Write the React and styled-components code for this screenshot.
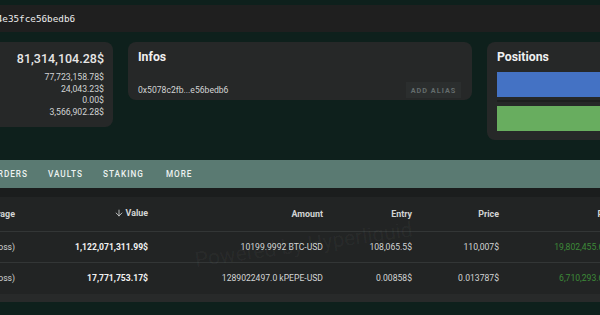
import React from 'react'
import styled, { createGlobalStyle } from 'styled-components'
import { ArrowDown } from 'lucide-react'

const color = {
	bg: '#0e201c',
	bar: '#1f1f1f',
	card: '#262828',
	table: '#222424',
	line: '#333636',
	text: '#e6e6e6',
	soft: '#d2d4d4',
	tab: '#5a7a72',
	blue: '#4472c4',
	green: '#68ad5f',
	pnl: '#3d8a38',
}

const Global = createGlobalStyle`
	html, body {
		margin: 0;
		background: ${ color.bg };
		overflow: hidden;
	}
	body {
		font-family: Roboto, "Noto Sans", sans-serif;
		color: ${ color.text };
	}
`

const Page = styled.div`
	width: 1100px;
	margin-left: -200px;
	padding-top: 5px;
	display: flex;
	flex-direction: column;
`
const TopBar = styled.div`
	height: 27px;
	background: ${ color.bar };
	display: flex;
	align-items: center;
	padding-left: 40px;
	font-family: "DejaVu Sans Mono", "Liberation Mono", monospace;
	font-size: 9.3px;
	color: #ececec;
`
const Cards = styled.div`
	display: flex;
	align-items: flex-start;
	gap: 15px;
	margin: 10px 0 20px 20px;
`
const Card = styled.div`
	background: ${ color.card };
	border-radius: 8px;
	width: ${ p => p.$w }px;
	height: ${ p => p.$h }px;
	box-sizing: border-box;
	padding: 7px 10px 0;
	display: flex;
	flex-direction: column;
`
const Totals = styled(Card)`
	align-items: flex-end;
	padding: 9px 9px 0 0;
`
const Big = styled.div`
	font-size: 12.5px;
	font-weight: 500;
	line-height: 16px;
	margin-bottom: 5px;
`
const Small = styled.div`
	font-size: 8.7px;
	line-height: 11.7px;
	color: ${ color.soft };
`
const CardTitle = styled.div`
	font-size: 12.3px;
	font-weight: 700;
	line-height: 16px;
	color: #f0f0f0;
`
const InfoRow = styled.div`
	display: flex;
	align-items: center;
	justify-content: space-between;
	margin-top: 17px;
	padding-right: 1px;
	font-size: 8.6px;
	color: ${ color.soft };
`
const Alias = styled.span`
	background: #2b2e2e;
	color: #646c6c;
	font-size: 7.3px;
	font-weight: 700;
	letter-spacing: 1px;
	height: 16px;
	width: 55px;
	display: flex;
	align-items: center;
	justify-content: center;
`
const Bars = styled.div`
	display: flex;
	flex-direction: column;
	margin-top: 7px;
`
const Bar = styled.div`
	height: 25px;
	background: ${ p => p.$c };
`
const Divider = styled.div`
	height: 2px;
	margin: 3px 0 4px;
	background: #1d1f1f;
`
const Tabs = styled.div`
	display: flex;
	align-items: center;
	height: 28px;
	margin-left: 20px;
	padding-left: 62px;
	background: ${ color.tab };
`
const Tab = styled.div`
	padding: 0 10px;
	margin-left: ${ p => p.$gap || 0 }px;
	font-size: 8.2px;
	font-weight: 500;
	letter-spacing: 1px;
	color: #eef2f1;
	white-space: nowrap;
`
const Shade = styled.div`
	height: 9px;
	margin-left: 20px;
	background: #1b1d1d;
`
const TableWrap = styled.div`
	position: relative;
	margin-left: 20px;
	background: ${ color.table };
	overflow: hidden;
`
const Table = styled.table`
	border-collapse: collapse;
	table-layout: fixed;
`
const Th = styled.th`
	width: ${ p => p.$w }px;
	height: 34px;
	padding: 0;
	text-align: ${ p => p.$left ? 'left' : 'right' };
	font-size: 8.9px;
	font-weight: 700;
	color: ${ color.soft };
	border-bottom: 1px solid ${ color.line };
	white-space: nowrap;
`
const Td = styled.td`
	height: 30px;
	padding: 0;
	text-align: ${ p => p.$left ? 'left' : 'right' };
	font-size: 8.6px;
	font-weight: ${ p => p.$bold ? 700 : 400 };
	color: ${ p => p.$pnl ? color.pnl : p.$bold ? '#f2f2f2' : color.soft };
	border-bottom: 1px solid ${ p => p.$last ? 'transparent' : color.line };
	white-space: nowrap;
`
const SortHead = styled.span`
	display: inline-flex;
	align-items: center;
	gap: 2px;
`
const Foot = styled.div`
	height: 8px;
	background: #282a2a;
`
const Watermark = styled.div`
	position: absolute;
	left: 375px;
	top: 53px;
	font-size: 21px;
	line-height: 21px;
	white-space: nowrap;
	color: rgba(255, 255, 255, 0.045);
	transform: rotate(-8deg);
	transform-origin: left center;
	pointer-events: none;
`

const cols = [
	{ key: 'coin', label: 'Coin', w: 90, left: true },
	{ key: 'lev', label: 'Leverage', w: 105 },
	{ key: 'value', label: 'Value', w: 133 },
	{ key: 'amount', label: 'Amount', w: 175 },
	{ key: 'entry', label: 'Entry', w: 89 },
	{ key: 'price', label: 'Price', w: 87 },
	{ key: 'pnl', label: 'PnL', w: 114 },
	{ key: 'funding', label: 'Funding', w: 110 },
]

const rows = [
	{ coin: 'BTC', lev: '20x (Cross)', value: '1,122,071,311.99$', amount: '10199.9992 BTC-USD', entry: '108,065.5$', price: '110,007$', pnl: '19,802,455.63$', funding: '-1,204,511.2$' },
	{ coin: 'kPEPE', lev: '10x (Cross)', value: '17,771,753.17$', amount: '1289022497.0 kPEPE-USD', entry: '0.00858$', price: '0.013787$', pnl: '6,710,293.61$', funding: '-48,220.9$' },
]

const App = () => {
	return (
		<>
			<Global />
			<Page>
				<TopBar>0x5078c2fb9a1d3e7c2b84f06a1d4e35fce56bedb6</TopBar>
				<Cards>
					<Totals $w={ 293 } $h={ 85 }>
						<Big>81,314,104.28$</Big>
						<Small>77,723,158.78$</Small>
						<Small>24,043.23$</Small>
						<Small>0.00$</Small>
						<Small>3,566,902.28$</Small>
					</Totals>
					<Card $w={ 344 } $h={ 58 }>
						<CardTitle>Infos</CardTitle>
						<InfoRow>
							<span>0x5078c2fb...e56bedb6</span>
							<Alias>ADD ALIAS</Alias>
						</InfoRow>
					</Card>
					<Card $w={ 330 } $h={ 98 }>
						<CardTitle>Positions</CardTitle>
						<Bars>
							<Bar $c={ color.blue } />
							<Divider />
							<Bar $c={ color.green } />
						</Bars>
					</Card>
				</Cards>
				<Tabs>
					<Tab>POSITIONS</Tab>
					<Tab>OPEN ORDERS</Tab>
					<Tab>VAULTS</Tab>
					<Tab>STAKING</Tab>
					<Tab $gap={ 2 }>MORE</Tab>
				</Tabs>
				<Shade />
				<TableWrap>
					<Table>
						<thead>
							<tr>
								{ cols.map(c => (
									<Th key={ c.key } $w={ c.w } $left={ c.left }>
										{ c.key === 'value'
											? <SortHead><ArrowDown size={ 10 } strokeWidth={ 2 } />{ c.label }</SortHead>
											: c.label }
									</Th>
								)) }
							</tr>
						</thead>
						<tbody>
							{ rows.map((r, i) => (
								<tr key={ r.coin }>
									{ cols.map(c => (
										<Td
											key={ c.key }
											$left={ c.left }
											$bold={ c.key === 'value' }
											$pnl={ c.key === 'pnl' }
											$last={ i === rows.length - 1 }
										>
											{ r[c.key] }
										</Td>
									)) }
								</tr>
							)) }
						</tbody>
					</Table>
					<Foot />
					<Watermark>Powered by Hyperliquid</Watermark>
				</TableWrap>
			</Page>
		</>
	)
}

export default App
